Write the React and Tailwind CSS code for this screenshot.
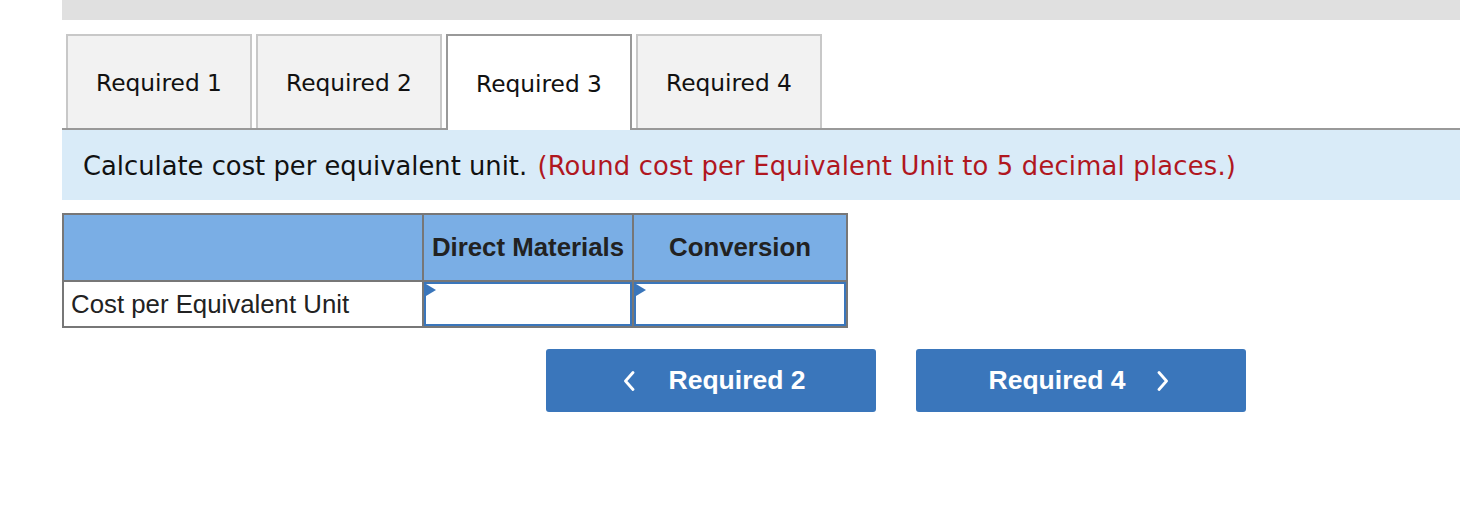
const tabs = ["Required 1", "Required 2", "Required 3", "Required 4"];

function InputCell() {
  return (
    <td className="p-0 border-2 border-[#777]">
      <div className="relative h-[44px] border-2 border-[#3a76bb] bg-white">
        <span className="absolute left-0 top-0 w-0 h-0 border-y-[6px] border-y-transparent border-l-[10px] border-l-[#3a76bb]" />
      </div>
    </td>
  );
}

function Chevron({ dir }) {
  const pts = dir === "left" ? "10,1.5 2.5,10 10,18.5" : "2,1.5 9.5,10 2,18.5";
  return (
    <svg width="12" height="20" viewBox="0 0 12 20" className="shrink-0">
      <polyline
        points={pts}
        fill="none"
        stroke="white"
        strokeWidth="2.8"
        strokeLinecap="round"
        strokeLinejoin="round"
      />
    </svg>
  );
}

export default function App() {
  const active = 2;

  return (
    <div className="bg-white min-h-screen w-[1484px] h-[516px] pl-[62px] pr-[24px] font-['DejaVu_Sans',Verdana,sans-serif]">
      {/* top bar */}
      <div className="h-[20px] bg-[#e0e0e0]" />

      {/* tabs */}
      <div className="mt-[14px] flex items-end gap-[4px] pl-[4px] border-b-2 border-[#999]">
        {tabs.map((t, i) => (
          <div
            key={t}
            className={
              i === active
                ? "w-[186px] h-[96px] -mb-[2px] pt-[2px] flex items-center justify-center bg-white border-2 border-b-0 border-[#999] text-[23.3px] text-[#111]"
                : "w-[186px] h-[94px] pt-[2px] flex items-center justify-center bg-[#f2f2f2] border-2 border-b-0 border-[#c8c8c8] text-[23.3px] text-[#111]"
            }
          >
            {t}
          </div>
        ))}
      </div>

      {/* instruction */}
      <div className="h-[70px] bg-[#d9ebf8] flex items-center pl-[21px] pt-[2px] text-[25.8px] text-[#111]">
        <span>
          Calculate cost per equivalent unit.{" "}
          <span className="ml-[2px] text-[#b0171f] tracking-[0.2px]">
            (Round cost per Equivalent Unit to 5 decimal places.)
          </span>
        </span>
      </div>

      {/* table */}
      <table className="mt-[13px] border-collapse font-['Liberation_Sans',Arial,sans-serif] text-[#222]">
        <thead>
          <tr className="bg-[#7aaee5] h-[67px]">
            <th className="w-[360px] border-2 border-[#777]" />
            <th className="w-[210px] border-2 border-[#777] text-[25.8px] font-bold">
              Direct Materials
            </th>
            <th className="w-[214px] border-2 border-[#777] text-[25.8px] font-bold">
              Conversion
            </th>
          </tr>
        </thead>
        <tbody>
          <tr>
            <td className="border-2 border-[#777] pl-[7px] text-[25.8px] text-left">
              Cost per Equivalent Unit
            </td>
            <InputCell />
            <InputCell />
          </tr>
        </tbody>
      </table>

      {/* nav buttons */}
      <div className="mt-[21px] ml-[484px] flex gap-[40px] font-['Liberation_Sans',Arial,sans-serif]">
        <button className="w-[330px] h-[63px] rounded-[3px] bg-[#3a76bb] text-white text-[26.5px] font-bold flex items-center justify-center gap-[34px] pl-[6px]">
          <Chevron dir="left" />
          <span>Required 2</span>
        </button>
        <button className="w-[330px] h-[63px] rounded-[3px] bg-[#3a76bb] text-white text-[26.5px] font-bold flex items-center justify-center gap-[32px] pr-[4px]">
          <span>Required 4</span>
          <Chevron dir="right" />
        </button>
      </div>
    </div>
  );
}
